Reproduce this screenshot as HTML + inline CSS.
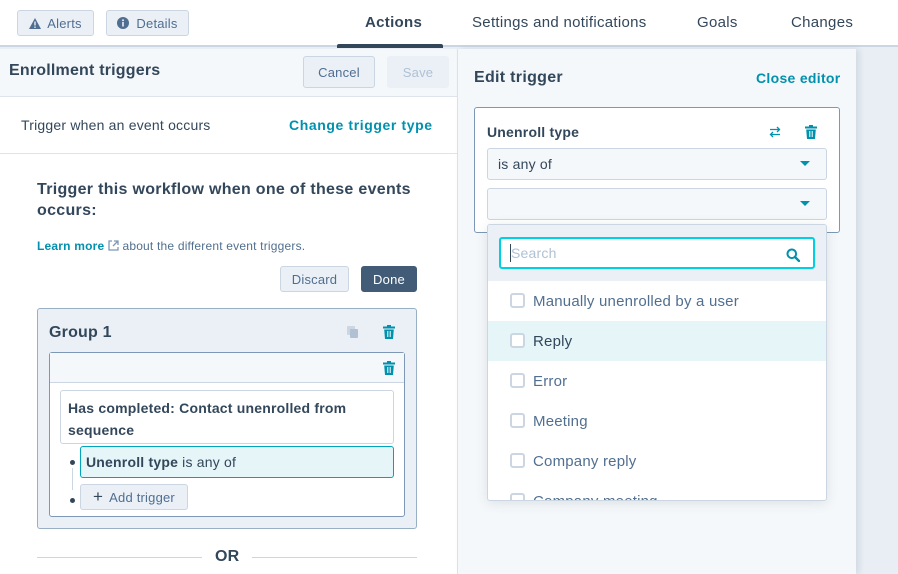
<!DOCTYPE html>
<html><head><meta charset="utf-8"><style>
*{box-sizing:border-box;margin:0;padding:0}
body{width:898px;height:574px;overflow:hidden;position:relative;font-family:"Liberation Sans",sans-serif;color:#33475b;background:#e9eef5;letter-spacing:0.2px}
.a{position:absolute}
.btn{position:absolute;border:1px solid #cbd6e2;background:#eaf0f6;border-radius:3px;font-size:13px;display:flex;align-items:center;justify-content:center;color:#506e91}
.b{font-weight:bold}
.teal{color:#0091ae}
.cb{position:absolute;width:15px;height:15px;border:2px solid #cbd6e2;border-radius:3px;background:#fff}
.it{position:absolute;left:533px;font-size:15px;color:#516f90}
.tab{position:absolute;top:14px;font-size:15px;letter-spacing:0.3px}
</style></head><body>
<div class="a" style="left:0;top:0;width:898px;height:47px;background:#fff;border-bottom:2px solid #cbd6e2"></div>
<div class="btn" style="left:17px;top:10px;width:77px;height:26px"><svg width="12" height="11" viewBox="0 0 12 11" style="margin-right:6px"><path d="M6 0L12 11H0Z" fill="#506e91"/><rect x="5.3" y="3.5" width="1.4" height="4" fill="#eaf0f6"/><rect x="5.3" y="8.5" width="1.4" height="1.4" fill="#eaf0f6"/></svg>Alerts</div>
<div class="btn" style="left:106px;top:10px;width:83px;height:26px"><svg width="12" height="12" viewBox="0 0 12 12" style="margin-right:7px"><circle cx="6" cy="6" r="6" fill="#506e91"/><rect x="5.2" y="5" width="1.6" height="4.5" fill="#eaf0f6"/><circle cx="6" cy="3.3" r="1" fill="#eaf0f6"/></svg>Details</div>
<div class="tab b" style="left:365px">Actions</div>
<div class="a" style="left:337px;top:44px;width:106px;height:4px;background:#33475b;border-radius:2px 2px 0 0"></div>
<div class="tab" style="left:472px">Settings and notifications</div>
<div class="tab" style="left:697px">Goals</div>
<div class="tab" style="left:791px">Changes</div>

<div class="a" style="left:0;top:49px;width:458px;height:525px;background:#fff;border-right:1px solid #dfe3eb"></div>
<div class="a" style="left:0;top:49px;width:457px;height:48px;background:#f5f8fa;border-bottom:1px solid #dfe3eb"></div>
<div class="a b" style="left:9px;top:62px;font-size:16px">Enrollment triggers</div>
<div class="btn" style="left:303px;top:56px;width:72px;height:32px">Cancel</div>
<div class="btn" style="left:387px;top:56px;width:62px;height:32px;border-color:#eaf0f6;color:#b0c1d4">Save</div>
<div class="a" style="left:0;top:97px;width:457px;height:57px;border-bottom:1px solid #dfe3eb"></div>
<div class="a" style="left:21px;top:117px;font-size:14px">Trigger when an event occurs</div>
<div class="a b teal" style="left:289px;top:117px;font-size:14px;letter-spacing:0.6px">Change trigger type</div>
<div class="a b" style="left:37px;top:179px;font-size:16px;line-height:21px;width:395px;letter-spacing:0.3px">Trigger this workflow when one of these events occurs:</div>
<div class="a" style="left:37px;top:239px;font-size:12px;color:#516f90"><span class="b teal">Learn more</span> <svg width="11" height="11" viewBox="0 0 11 11" style="vertical-align:-1px"><path d="M4 1H1V10H10V7M6 1H10V5M10 1L5 6" fill="none" stroke="#7c98b6" stroke-width="1.3"/></svg> about the different event triggers.</div>
<div class="btn" style="left:280px;top:266px;width:69px;height:26px">Discard</div>
<div class="btn" style="left:361px;top:266px;width:56px;height:26px;background:#425b76;border-color:#425b76;color:#fff">Done</div>

<div class="a" style="left:37px;top:308px;width:380px;height:221px;background:#eaf0f6;border:1px solid #99afc4;border-radius:3px"></div>
<div class="a b" style="left:49px;top:324px;font-size:16px">Group 1</div>
<svg class="a" style="left:347px;top:326px" width="12" height="13" viewBox="0 0 12 13"><rect x="0" y="0" width="8" height="9" rx="1" fill="#cbd6e2"/><rect x="3" y="3" width="8" height="9" rx="1" fill="#b0c1d4"/></svg>
<svg class="a" style="left:383px;top:325px" width="12" height="14" viewBox="0 0 12 14"><rect x="0" y="1.5" width="12" height="2" fill="#0091ae"/><rect x="4" y="0" width="4" height="2" fill="#0091ae"/><path d="M1.2 4.5H10.8L10 14H2Z" fill="#0091ae"/><rect x="4.3" y="6" width="1" height="6" fill="#fff"/><rect x="6.7" y="6" width="1" height="6" fill="#fff"/></svg>
<div class="a" style="left:49px;top:352px;width:356px;height:165px;background:#fff;border:1px solid #7c98b6;border-radius:3px"></div>
<div class="a" style="left:50px;top:353px;width:354px;height:30px;background:#f5f8fa;border-bottom:1px solid #cbd6e2"></div>
<svg class="a" style="left:383px;top:361px" width="12" height="14" viewBox="0 0 12 14"><rect x="0" y="1.5" width="12" height="2" fill="#0091ae"/><rect x="4" y="0" width="4" height="2" fill="#0091ae"/><path d="M1.2 4.5H10.8L10 14H2Z" fill="#0091ae"/><rect x="4.3" y="6" width="1" height="6" fill="#fff"/><rect x="6.7" y="6" width="1" height="6" fill="#fff"/></svg>
<div class="a" style="left:60px;top:390px;width:334px;height:54px;border:1px solid #cbd6e2;border-radius:3px"></div>
<div class="a b" style="left:68px;top:397px;font-size:14px;line-height:22px;width:320px">Has completed: Contact unenrolled from sequence</div>
<div class="a" style="left:80px;top:446px;width:314px;height:32px;background:#e5f5f8;border:1px solid #00a4bd;border-radius:3px"></div>
<div class="a" style="left:86px;top:454px;font-size:14px"><b>Unenroll type</b> is any of</div>
<div class="a" style="left:70px;top:460px;width:5px;height:5px;border-radius:50%;background:#33475b"></div>
<div class="a" style="left:72px;top:468px;width:1px;height:22px;background:#cbd6e2"></div>
<div class="a" style="left:70px;top:498px;width:5px;height:5px;border-radius:50%;background:#33475b"></div>
<div class="btn" style="left:80px;top:484px;width:108px;height:26px"><span style="font-size:17px;margin-right:6px;color:#33475b">+</span>Add trigger</div>
<div class="a" style="left:37px;top:557px;width:165px;height:1px;background:#cbd6e2"></div>
<div class="a" style="left:252px;top:557px;width:165px;height:1px;background:#cbd6e2"></div>
<div class="a b" style="left:215px;top:548px;font-size:16px">OR</div>

<div class="a" style="left:458px;top:49px;width:398px;height:525px;background:#f5f8fa;box-shadow:3px 0 6px rgba(45,62,80,.12)"></div>
<div class="a b" style="left:474px;top:69px;font-size:16px;letter-spacing:0.3px">Edit trigger</div>
<div class="a b teal" style="left:756px;top:70px;font-size:14px;letter-spacing:0.3px">Close editor</div>
<div class="a" style="left:474px;top:107px;width:366px;height:126px;background:#fff;border:1px solid #7c98b6;border-radius:3px"></div>
<div class="a b" style="left:487px;top:124px;font-size:14px">Unenroll type</div>
<svg class="a" style="left:769px;top:126px" width="12" height="12" viewBox="0 0 12 12"><path d="M1 3.5H10M8 1L10.5 3.5L8 6M11 8.5H2M4 6L1.5 8.5L4 11" fill="none" stroke="#0091ae" stroke-width="1.3"/></svg>
<svg class="a" style="left:805px;top:125px" width="12" height="14" viewBox="0 0 12 14"><rect x="0" y="1.5" width="12" height="2" fill="#0091ae"/><rect x="4" y="0" width="4" height="2" fill="#0091ae"/><path d="M1.2 4.5H10.8L10 14H2Z" fill="#0091ae"/><rect x="4.3" y="6" width="1" height="6" fill="#fff"/><rect x="6.7" y="6" width="1" height="6" fill="#fff"/></svg>
<div class="a" style="left:487px;top:148px;width:340px;height:32px;background:#f5f8fa;border:1px solid #cbd6e2;border-radius:3px"></div>
<div class="a" style="left:498px;top:156px;font-size:14px">is any of</div>
<div class="a" style="left:800px;top:161px;border:5px solid transparent;border-top:5px solid #0091ae;border-bottom:0"></div>
<div class="a" style="left:487px;top:188px;width:340px;height:32px;background:#f5f8fa;border:1px solid #cbd6e2;border-radius:3px"></div>
<div class="a" style="left:800px;top:201px;border:5px solid transparent;border-top:5px solid #0091ae;border-bottom:0"></div>

<div class="a" style="left:487px;top:224px;width:340px;height:277px;background:#fff;border:1px solid #cbd6e2;border-radius:3px;box-shadow:0 2px 12px rgba(45,62,80,.12);overflow:hidden">
<div style="height:56px;background:#eaf0f6"></div>
<div style="position:absolute;left:0;top:96px;width:340px;height:40px;background:#e5f5f8"></div>
</div>
<div class="a" style="left:499px;top:237px;width:316px;height:32px;background:#fff;border:2px solid #00d0e4;border-radius:3px"></div>
<div class="a" style="left:511px;top:245px;font-size:14px;color:#b0c1d4">Search</div>
<div class="a" style="left:510px;top:244px;width:1px;height:18px;background:#33475b"></div>
<svg class="a" style="left:786px;top:248px" width="14" height="14" viewBox="0 0 14 14"><circle cx="5.8" cy="5.8" r="4.3" fill="none" stroke="#0091ae" stroke-width="2"/><path d="M9 9L13 13" stroke="#0091ae" stroke-width="2.3" stroke-linecap="round"/></svg>
<div class="cb" style="left:510px;top:293px"></div><div class="it" style="top:293px">Manually unenrolled by a user</div>
<div class="cb" style="left:510px;top:333px"></div><div class="it" style="top:333px;color:#33475b">Reply</div>
<div class="cb" style="left:510px;top:373px"></div><div class="it" style="top:373px">Error</div>
<div class="cb" style="left:510px;top:413px"></div><div class="it" style="top:413px">Meeting</div>
<div class="cb" style="left:510px;top:453px"></div><div class="it" style="top:453px">Company reply</div>
<div class="a" style="left:488px;top:490px;width:338px;height:10px;overflow:hidden"><div class="cb" style="left:22px;top:3px"></div><div class="it" style="left:45px;top:3px">Company meeting</div></div>
</body></html>
